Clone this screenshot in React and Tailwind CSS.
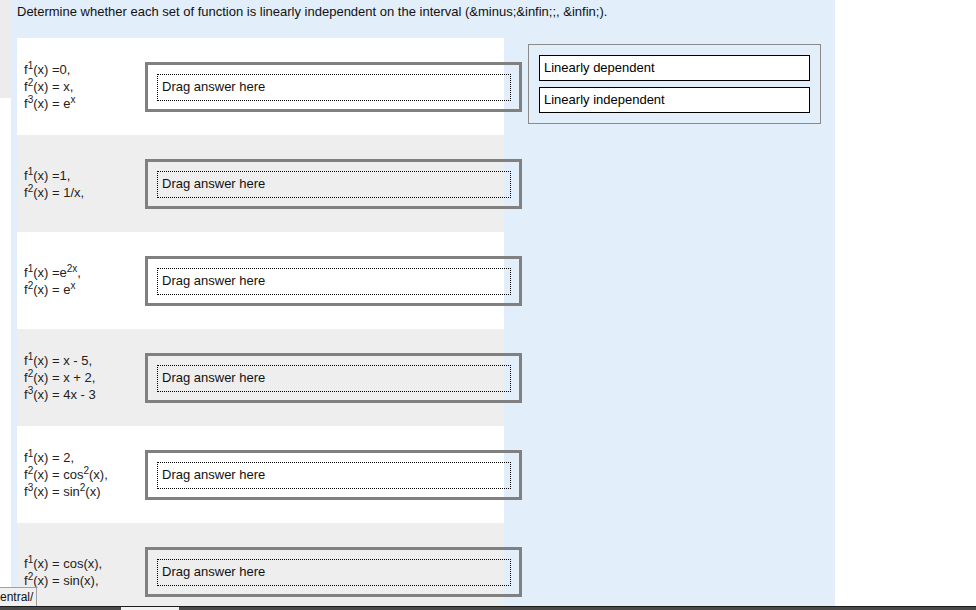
import React from 'react';

const Sup = ({ children }) => <sup className="text-[10px] leading-none">{children}</sup>;

const F = ({ n, children }) => (
  <div className="whitespace-nowrap">
    f<sup className="text-[10px] leading-none">{n}</sup>(x) {children}
  </div>
);

const rows = [
  [<F n="1" key="a">=0,</F>, <F n="2" key="b">= x,</F>, <F n="3" key="c">= e<Sup>x</Sup></F>],
  [<F n="1" key="a">=1,</F>, <F n="2" key="b">= 1/x,</F>],
  [<F n="1" key="a">=e<Sup>2x</Sup>,</F>, <F n="2" key="b">= e<Sup>x</Sup></F>],
  [<F n="1" key="a">= x - 5,</F>, <F n="2" key="b">= x + 2,</F>, <F n="3" key="c">= 4x - 3</F>],
  [
    <F n="1" key="a">= 2,</F>,
    <F n="2" key="b">= cos<Sup>2</Sup>(x),</F>,
    <F n="3" key="c">= sin<Sup>2</Sup>(x)</F>,
  ],
  [<F n="1" key="a">= cos(x),</F>, <F n="2" key="b">= sin(x),</F>],
];

const DropBox = () => (
  <div className="w-[377px] shrink-0 border-[3px] border-[#808080] pl-[9px] pr-[8px] pt-[9px] pb-[8px]">
    <div className="h-[27px] border border-dotted border-black pl-[4px] flex items-center text-[13px] text-[#111]">
      Drag answer here
    </div>
  </div>
);

export default function App() {
  return (
    <div className="relative w-[976px] h-[610px] overflow-hidden bg-white text-black font-['Liberation_Sans',Arial,sans-serif] text-[13px]">
      <div className="flex h-[606px]">
        <div className="w-[11px] shrink-0">
          <div className="h-[98px] bg-[#ececec]" />
        </div>
        <div className="w-[824px] shrink-0 bg-[#e2eef9] pl-[6px] flex overflow-hidden">
          <div className="w-[487px] shrink-0">
            <div className="h-[38px] pt-[4px] leading-[15px] whitespace-nowrap text-[#111]">
              Determine whether each set of function is linearly independent on the interval (&amp;minus;&amp;infin;;, &amp;infin;).
            </div>
            {rows.map((lines, i) => (
              <div
                key={i}
                className={`h-[97px] flex items-center pl-[7px] ${i % 2 === 0 ? 'bg-white' : 'bg-[#eeeeee]'}`}
              >
                <div className="w-[121px] shrink-0 leading-[17px] text-[#222]">{lines}</div>
                <DropBox />
              </div>
            ))}
          </div>
          <div className="ml-[24px] mt-[44px]">
            <div className="w-[293px] border border-[#8a8a8a] p-[10px] flex flex-col gap-[6px]">
              <div className="h-[26px] border border-black bg-white pl-[4px] flex items-center">
                Linearly dependent
              </div>
              <div className="h-[26px] border border-black bg-white pl-[4px] flex items-center">
                Linearly independent
              </div>
            </div>
          </div>
        </div>
      </div>
      <div className="h-[4px] border-t border-[#1c1c1c] bg-[#4a4a4a] flex">
        <div className="ml-[121px] w-[58px] bg-[#f0f0f0]" />
      </div>
      <div className="absolute left-0 top-[587px] h-[19px] w-[37px] bg-[#f0f0f0] border-t border-r border-[#a0a0a0] flex items-center text-[12px] text-[#111]">
        <span className="whitespace-nowrap">entral/</span>
      </div>
    </div>
  );
}
